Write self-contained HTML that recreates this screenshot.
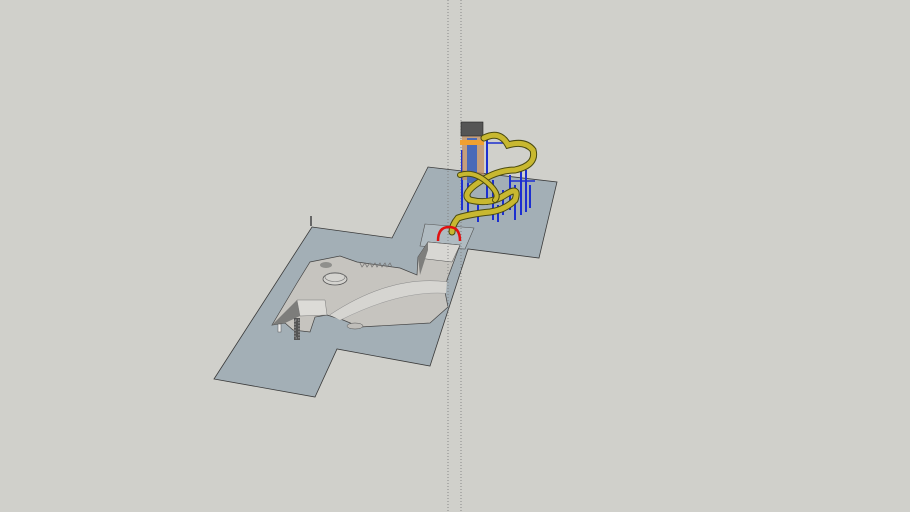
<!DOCTYPE html>
<html><head><meta charset="utf-8"><style>
html,body{margin:0;padding:0;background:#d0d0cb;}
svg{display:block}
</style></head><body>
<svg width="910" height="512" viewBox="0 0 910 512" xmlns="http://www.w3.org/2000/svg">
<rect width="910" height="512" fill="#d0d0cb"/>
<!-- slab -->
<polygon points="312,227 392,238 428,167 557,182 539,258 468,249 430,366 337,349 315,397 214,379" fill="#a3afb6" stroke="#3a3a3a" stroke-width="0.8"/>
<!-- slide landing square -->
<polygon points="425,224 474,228 465,249 420,246" fill="#b0bbc1" stroke="#555" stroke-width="0.6"/>
<!-- pool -->
<polygon points="297,283 310,262 340,256 357,262 400,268 417,275 418,257 428,242 460,245 447,280 445,292 448,307 430,323 360,327 343,320 327,315 315,317 310,332 293,330 285,323 272,325" fill="#c6c4bf" stroke="#444" stroke-width="0.7"/>
<polygon points="428,242 460,245 452,262 418,258" fill="#d8d7d3" stroke="#555" stroke-width="0.5"/>
<polygon points="418,257 428,242 428,250 420,275" fill="#7e7e7c"/>
<polygon points="272,325 297,300 300,316 285,323" fill="#7d7d7b"/>
<polygon points="297,300 325,300 327,315 300,316" fill="#dcdbd7" stroke="#666" stroke-width="0.4"/>
<path d="M330,315 Q390,275 447,282" fill="none" stroke="#888" stroke-width="1"/>
<path d="M340,320 Q400,290 446,293" fill="none" stroke="#999" stroke-width="1"/>
<path d="M330,315 Q390,275 447,282 L446,293 Q400,290 340,320 Z" fill="#d6d5d1"/>
<ellipse cx="335" cy="279" rx="12" ry="6" fill="#d4d3cf" stroke="#555" stroke-width="0.8"/>
<ellipse cx="335" cy="277" rx="10" ry="4.5" fill="none" stroke="#777" stroke-width="0.6"/>
<ellipse cx="326" cy="265" rx="6" ry="3" fill="#8f8f8c"/>
<path d="M360,263 l2,4 l3,-4 l2,4 l3,-4 l2,4 l3,-4 l2,4 l3,-4 l2,4 l3,-4 l2,4 l3,-4 l2,4" fill="none" stroke="#777" stroke-width="0.8"/>
<ellipse cx="355" cy="326" rx="8" ry="3" fill="#c0beba" stroke="#555" stroke-width="0.5"/>
<rect x="294" y="318" width="6" height="22" fill="#555"/>
<rect x="295" y="320" width="4" height="18" fill="none" stroke="#ddd" stroke-width="0.6" stroke-dasharray="1.5 1.5"/>
<rect x="278" y="324" width="3" height="8" fill="#eee" stroke="#555" stroke-width="0.5"/>
<!-- dotted axis -->
<line x1="448" y1="0" x2="448" y2="512" stroke="#777" stroke-width="0.8" stroke-dasharray="1 2"/>
<line x1="461" y1="0" x2="461" y2="512" stroke="#777" stroke-width="0.8" stroke-dasharray="1 2"/>
<!-- blue supports -->
<g stroke="#1c2fd0" stroke-width="2">
<line x1="462" y1="150" x2="462" y2="210"/><line x1="468" y1="175" x2="468" y2="215"/>
<line x1="487" y1="140" x2="487" y2="205"/><line x1="493" y1="180" x2="493" y2="220"/>
<line x1="503" y1="190" x2="503" y2="215"/><line x1="510" y1="175" x2="510" y2="210"/>
<line x1="515" y1="185" x2="515" y2="220"/><line x1="521" y1="170" x2="521" y2="215"/>
<line x1="526" y1="170" x2="526" y2="212"/><line x1="530" y1="185" x2="530" y2="208"/>
<line x1="478" y1="205" x2="478" y2="222"/><line x1="498" y1="205" x2="498" y2="222"/>
<line x1="510" y1="181" x2="535" y2="181" stroke-width="1.5"/>
<line x1="488" y1="143" x2="505" y2="143" stroke-width="1.5"/>
</g>
<!-- tower -->
<rect x="462" y="135" width="22" height="45" fill="#c08a5a" opacity="0.7"/>
<rect x="467" y="138" width="10" height="45" fill="#4a6ab8"/>
<rect x="460" y="140" width="24" height="5" fill="#f0a030"/>
<rect x="461" y="122" width="22" height="14" fill="#555" stroke="#222" stroke-width="0.6"/>
<!-- yellow slide -->
<g fill="none" stroke-linecap="round">
<path d="M484,138 Q500,130 508,145 Q525,140 533,150 Q537,165 515,170 Q495,170 475,185 Q462,195 470,200 Q490,205 505,195 Q520,185 515,200 Q505,210 490,212 Q470,214 458,218 Q452,225 452,232" stroke="#4a4a10" stroke-width="7"/>
<path d="M484,138 Q500,130 508,145 Q525,140 533,150 Q537,165 515,170 Q495,170 475,185 Q462,195 470,200 Q490,205 505,195 Q520,185 515,200 Q505,210 490,212 Q470,214 458,218 Q452,225 452,232" stroke="#c8b830" stroke-width="5"/>
<path d="M460,175 Q475,170 490,185 Q500,195 495,200" stroke="#4a4a10" stroke-width="6"/>
<path d="M460,175 Q475,170 490,185 Q500,195 495,200" stroke="#c8b830" stroke-width="4"/>
</g>
<path d="M438,241 Q438,227 449,227 Q460,227 460,241" fill="none" stroke="#e01010" stroke-width="2.5"/>
<rect x="310" y="216" width="2" height="10" fill="#666"/>
</svg>
</body></html>
